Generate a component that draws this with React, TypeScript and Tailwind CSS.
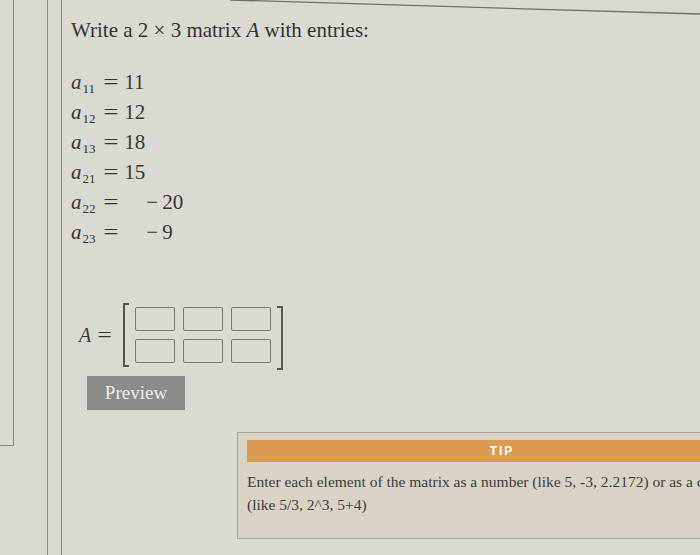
const serif = { fontFamily: '"Liberation Serif", "DejaVu Serif", serif' };

function Entry({ sub, value, neg }: { sub: string; value: string; neg?: boolean }) {
  return (
    <div className="flex items-baseline h-[30px] text-[21px] text-[#363636]">
      <span className="italic">a</span>
      <span className="text-[13px] ml-[1px] translate-y-[4px] inline-block w-[14px]">{sub}</span>
      <span className="ml-[8px] inline-block scale-x-[1.3]">=</span>
      {neg ? (
        <>
          <span className="ml-[30px]">−</span>
          <span className="ml-[4px]">{value}</span>
        </>
      ) : (
        <span className="ml-[8px]">{value}</span>
      )}
    </div>
  );
}

function Cell() {
  return <div className="w-[40px] h-[24px] border border-[#7a7a76] rounded-[2px] bg-[#dcdbd3]" />;
}

export default function App() {
  const entries = [
    { sub: '11', value: '11' },
    { sub: '12', value: '12' },
    { sub: '13', value: '18' },
    { sub: '21', value: '15' },
    { sub: '22', value: '20', neg: true },
    { sub: '23', value: '9', neg: true },
  ];

  return (
    <div className="relative w-[700px] h-[555px] overflow-hidden bg-[#dbdad2]" style={serif}>
      {/* slanted top border of the content frame */}
      <svg className="absolute left-0 top-0" width="700" height="20">
        <line x1="230" y1="0" x2="700" y2="14" stroke="#707070" strokeWidth="1.3" />
      </svg>

      <div className="flex h-full">
        {/* left side panel */}
        <div className="w-[14px] h-[446px] border-r border-b border-[#8a8a86] shrink-0" />
        <div className="w-[34px] shrink-0 border-r border-[#8a8a86]" />
        <div className="w-[14px] shrink-0 border-r border-[#8a8a86]" />

        {/* main content */}
        <div className="flex-1 pl-[9px] pt-[14px] relative">
          <div className="text-[21px] leading-[32px] text-[#333]">
            Write a 2 × 3 matrix <span className="italic">A</span> with entries:
          </div>

          <div className="mt-[21px] flex flex-col">
            {entries.map((e) => (
              <Entry key={e.sub} sub={e.sub} value={e.value} neg={e.neg} />
            ))}
          </div>

          <div className="mt-[56px] ml-[8px] flex items-center">
            <span className="text-[20px] text-[#3a3a3a] italic">A</span>
            <span className="text-[20px] text-[#3a3a3a] ml-[8px] inline-block scale-x-[1.3]">=</span>
            <div className="ml-[12px] flex items-stretch">
              <div className="w-[6px] border-l-2 border-t-2 border-b-2 border-[#555]" />
              <div className="grid grid-cols-3 gap-x-[8px] gap-y-[8px] px-[6px] py-[4px]">
                <Cell />
                <Cell />
                <Cell />
                <Cell />
                <Cell />
                <Cell />
              </div>
              <div className="w-[6px] border-r-2 border-t-2 border-b-2 border-[#555] mt-[3px] -mb-[3px]" />
            </div>
          </div>

          <button className="mt-[9px] ml-[16px] w-[98px] h-[34px] bg-[#8b8b89] text-[#ececec] text-[19px] flex items-center justify-center">
            Preview
          </button>

          {/* tip box */}
          <div className="absolute left-[175px] top-[432px] w-[550px] h-[107px] border border-[#a9a398] bg-[#d9d3c6] px-[9px] pt-[7px]">
            <div className="h-[22px] bg-[#d99a52] flex items-center justify-center pr-[20px]">
              <span className="text-white text-[12px] font-bold tracking-[2px]" style={{ fontFamily: '"Liberation Sans", Arial, sans-serif' }}>
                TIP
              </span>
            </div>
            <div className="mt-[8px] text-[15.5px] leading-[23px] text-[#3d3d3d] whitespace-nowrap">
              Enter each element of the matrix as a number (like 5, -3, 2.2172) or as a calculation
              <br />
              (like 5/3, 2^3, 5+4)
            </div>
          </div>
        </div>
      </div>
    </div>
  );
}
